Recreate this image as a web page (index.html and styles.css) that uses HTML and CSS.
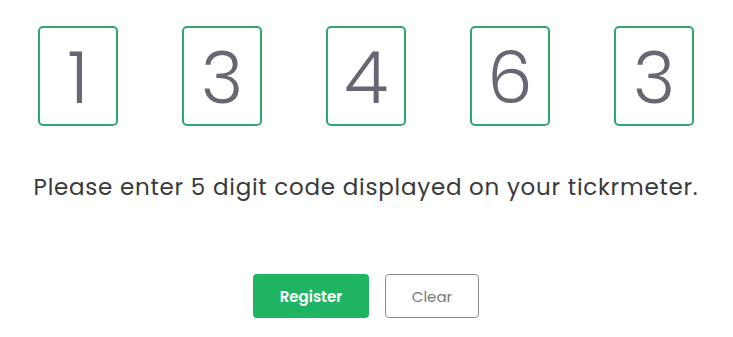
FILE: index.html
```html
<!DOCTYPE html>
<html lang="en">
<head>
<link rel="stylesheet" href="styles.css">
<meta charset="utf-8">
<title>Register tickrmeter</title>
</head>
<body>
<div class="wrapper">
	<div class="digits">
		<div class="digit">1</div>
		<div class="digit">3</div>
		<div class="digit">4</div>
		<div class="digit">6</div>
		<div class="digit">3</div>
	</div>
	<p class="hint">Please enter 5 digit code displayed on your tickrmeter.</p>
	<div class="actions">
		<button class="btn register">Register</button>
		<button class="btn clear">Clear</button>
	</div>
</div>
</body>
</html>
```

FILE: styles.css
```css
body{
	margin: 0px;
	padding: 0px;
	background-color: #fff;
	font-family: "Poppins", "Open Sans", sans-serif;
}

.wrapper{
	display: flex;
	flex-direction: column;
	align-items: center;
	padding-top: 26px;
	padding-right: 1px;
}

.digits{
	display: flex;
	gap: 64px;
}

.digit{
	width: 76px;
	height: 96px;
	border: 2px solid #2ea86c;
	border-radius: 5px;
	display: flex;
	align-items: center;
	justify-content: center;
	font-weight: 300;
	font-size: 72px;
	line-height: 96px;
	padding-top: 4px;
	box-sizing: border-box;
	height: 100px;
	width: 80px;
	color: #676774;
}

.hint{
	margin: 46px 0 0 0;
	font-size: 23px;
	line-height: 30px;
	color: #3a3a3a;
	letter-spacing: 0.75px;
}

.actions{
	display: flex;
	gap: 16px;
	margin-top: 72px;
}

.btn{
	height: 44px;
	border-radius: 4px;
	font-family: "Poppins", "Open Sans", sans-serif;
	font-size: 15px;
	cursor: pointer;
}

.register{
	width: 116px;
	background-color: #1eb464;
	border: none;
	color: #fff;
	font-weight: 600;
}

.clear{
	width: 94px;
	background-color: #fff;
	border: 1px solid #8a8a8a;
	color: #777;
	font-weight: 400;
}
```
